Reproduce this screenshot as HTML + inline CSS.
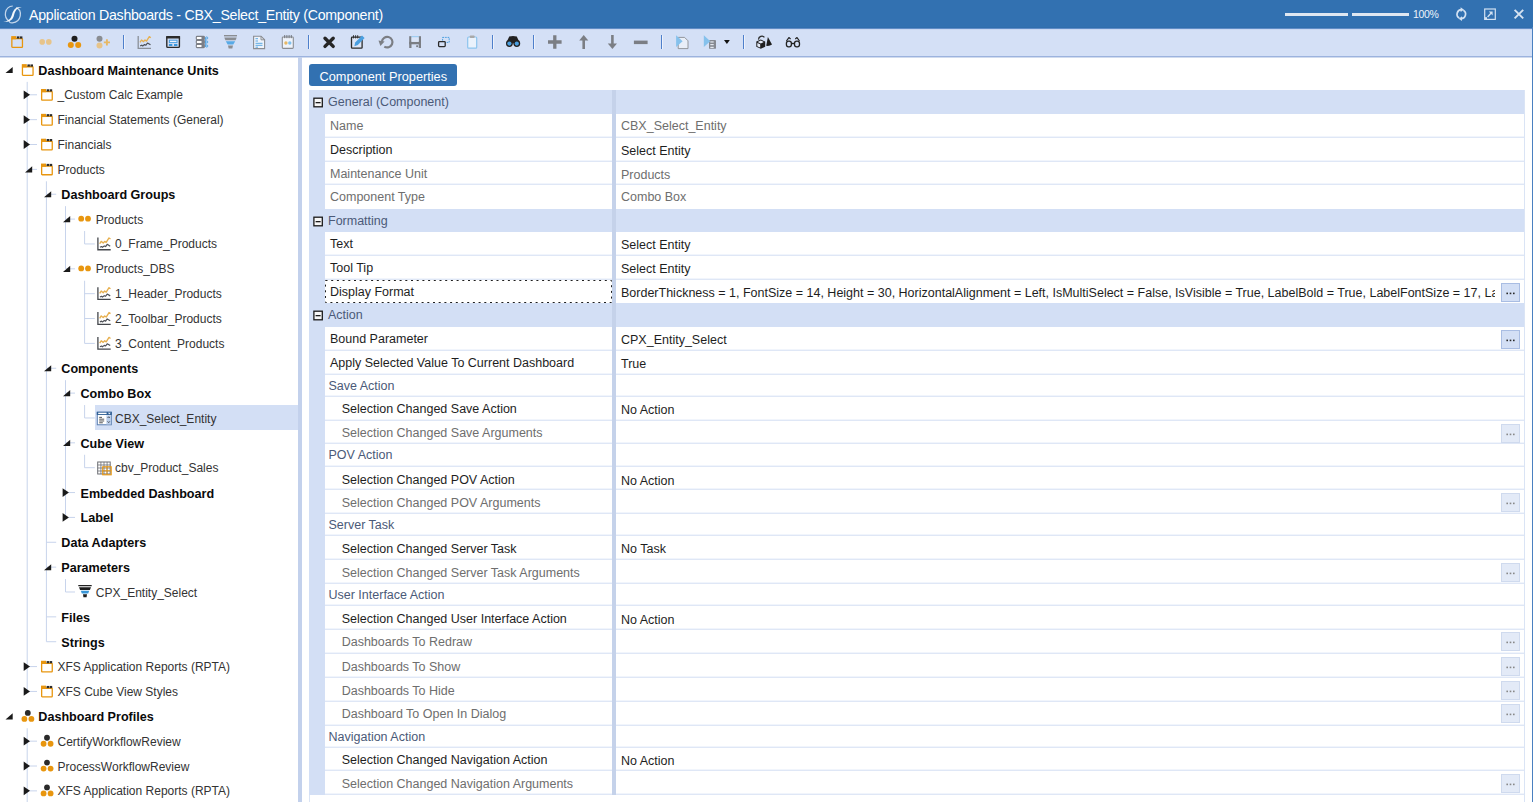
<!DOCTYPE html><html><head><meta charset="utf-8"><style>html,body{margin:0;padding:0;width:1536px;height:802px;overflow:hidden;background:#ffffff;}</style></head><body><div style="position:relative;width:1536px;height:802px;overflow:hidden"><div style="position:absolute;left:0;top:0;width:1533px;height:28px;background:#3271b1"></div>
<div style="position:absolute;left:0;top:27px;width:1533px;height:1px;background:#306ead"></div>
<div style="position:absolute;left:0;top:28px;width:1533px;height:1px;background:#5f8cc6"></div>
<svg style="position:absolute;left:0;top:0" width="28" height="28" viewBox="0 0 28 28">
<g fill="none" stroke="#e8f0fa" stroke-width="1.25" opacity="0.8">
<path d="M12.8 6 C 4.8 6.6, 2.4 17.2, 9.8 21.7"/>
<path d="M16.2 7.7 C 22.6 10.4, 21.8 21.6, 12.4 22.8 C 11.2 22.9, 10.2 22.6, 9.4 22.2"/>
</g>
<path d="M21.8 7 C 16 6.2, 13.4 9.6, 12.1 14.2 C 10.9 18.6, 8.6 21.2, 3.2 21.6 C 9.2 22.7, 12.8 20.2, 14 15.3 C 15.1 10.8, 16.8 7.8, 21.8 7 Z" fill="#ffffff" opacity="0.95"/>
</svg>
<div style="position:absolute;left:29px;top:7.2px;font:14.2px 'Liberation Sans', sans-serif;color:#ffffff;white-space:nowrap;line-height:16px;letter-spacing:-0.28px">Application Dashboards - CBX_Select_Entity (Component)</div>
<div style="position:absolute;left:1285px;top:13px;width:63px;height:3px;background:#dfe7f1"></div>
<div style="position:absolute;left:1352px;top:13px;width:57px;height:3px;background:#dfe7f1"></div>
<div style="position:absolute;left:1413px;top:8px;font:10.5px 'Liberation Sans', sans-serif;color:#eef3fa;white-space:nowrap;line-height:12px;letter-spacing:-0.3px">100%</div>
<svg style="position:absolute;left:1440px;top:0" width="96" height="28" viewBox="1440 0 96 28">
<g fill="none" stroke="#d2e1f2" stroke-width="1.7">
<path d="M1461.6 9.7 A4.5 4.5 0 0 0 1459.3 18.1"/><path d="M1461 18.7 A4.5 4.5 0 0 0 1463.3 10.3"/>
</g>
<path d="M1460.6 7.3 L1464 9.7 L1460.6 12.1 Z" fill="#d2e1f2"/>
<path d="M1462 16.3 L1458.6 18.7 L1462 21.1 Z" fill="#d2e1f2"/>
<rect x="1484.7" y="9" width="10.6" height="10.4" fill="none" stroke="#d2e1f2" stroke-width="1.2"/>
<rect x="1484.6" y="17.2" width="2.4" height="2.3" fill="#d2e1f2"/>
<path d="M1487.6 17 L1491.4 12.8" fill="none" stroke="#d2e1f2" stroke-width="1.3"/>
<path d="M1488.8 11.6 L1492.6 11.6 L1492.6 15.4 Z" fill="#d2e1f2"/>
<path d="M1514.6 9.8 L1523.2 18.4 M1523.2 9.8 L1514.6 18.4" stroke="#d6e3f1" stroke-width="1.9"/>
</svg>
<div style="position:absolute;left:0;top:29px;width:1532px;height:27px;background:#d4e0f6"></div>
<div style="position:absolute;left:0;top:29px;width:1532px;height:1px;background:#c9d7f1"></div>
<div style="position:absolute;left:0;top:56px;width:1532px;height:1px;background:#9cb3de"></div>
<div style="position:absolute;left:0;top:57px;width:1532px;height:1px;background:#d0dbee"></div>
<svg style="position:absolute;left:0;top:0" width="820" height="57" viewBox="0 0 820 57"><g transform="translate(11.2 36.1)"><rect x="0.65" y="2.6" width="10.6" height="8.6" rx="0.6" fill="none" stroke="#e8960f" stroke-width="1.3"/><rect x="0" y="0" width="5" height="3.2" fill="#e8960f"/><rect x="5.6" y="0.3" width="2.5" height="2.2" fill="#2b2b2b"/><rect x="8.6" y="0.3" width="2.6" height="2.2" fill="#2b2b2b"/></g><circle cx="42.2" cy="41.9" r="2.8" fill="#e7c48a"/><circle cx="48.8" cy="41.9" r="2.8" fill="#e7c48a"/><circle cx="74.5" cy="38.7" r="3" fill="#1f1f1f"/><circle cx="70.8" cy="44.9" r="3" fill="#e8960f"/><circle cx="78.2" cy="44.9" r="3" fill="#e8960f"/><circle cx="99.5" cy="38.7" r="3" fill="#8a8d92"/><circle cx="99.5" cy="45.6" r="3" fill="#e7c48a"/><path d="M103.8 42.4 H110 M106.9 39.3 V45.5" stroke="#e7b865" stroke-width="1.9"/><rect x="123" y="35" width="1" height="14" fill="#4d7fcb"/><rect x="124" y="35.5" width="1" height="13.5" fill="#edf2fb"/><rect x="308" y="35" width="1" height="14" fill="#4d7fcb"/><rect x="309" y="35.5" width="1" height="13.5" fill="#edf2fb"/><rect x="492" y="35" width="1" height="14" fill="#4d7fcb"/><rect x="493" y="35.5" width="1" height="13.5" fill="#edf2fb"/><rect x="533" y="35" width="1" height="14" fill="#4d7fcb"/><rect x="534" y="35.5" width="1" height="13.5" fill="#edf2fb"/><rect x="661" y="35" width="1" height="14" fill="#4d7fcb"/><rect x="662" y="35.5" width="1" height="13.5" fill="#edf2fb"/><rect x="743" y="35" width="1" height="14" fill="#4d7fcb"/><rect x="744" y="35.5" width="1" height="13.5" fill="#edf2fb"/><g transform="translate(137.5 35.8)"><path d="M0.7 0.3 V12.6 H13.5" fill="none" stroke="#8a9099" stroke-width="1.3"/><path d="M2.5 6.6 L4 4.2 L6 5.8 L7.5 4.2 L9 5.3 L11.8 0.8 L13.3 1.9" fill="none" stroke="#e7b050" stroke-width="1.35" stroke-linejoin="round"/><path d="M2.7 10.1 L4.3 9.4 L5.2 10.2 L7.1 8.8 L8.4 9.4 L10 7.2 L13 9" fill="none" stroke="#4f5258" stroke-width="1.2" stroke-linejoin="round"/></g><rect x="166.8" y="36.8" width="12.6" height="10.6" rx="1" fill="none" stroke="#2b2b2b" stroke-width="1.4"/><rect x="166.1" y="36.1" width="14" height="2.4" fill="#2b2b2b"/><rect x="169.4" y="40.2" width="7.6" height="2.4" fill="#eef3fb" stroke="#4a9fe0" stroke-width="1"/><rect x="168.9" y="44" width="3.4" height="2" fill="#3d98dc"/><rect x="174" y="44" width="3.4" height="2" fill="#3d98dc"/><rect x="196.3" y="36.4" width="8" height="3.2" rx="0.8" fill="#ffffff" stroke="#7c7f86" stroke-width="1.1"/><rect x="201.5" y="36.4" width="3" height="3.2" fill="#7c7f86"/><circle cx="206.7" cy="38.0" r="1.1" fill="none" stroke="#4a9fe0" stroke-width="0.9"/><rect x="196.3" y="40.4" width="8" height="3.2" rx="0.8" fill="#ffffff" stroke="#7c7f86" stroke-width="1.1"/><rect x="201.5" y="40.4" width="3" height="3.2" fill="#7c7f86"/><circle cx="206.7" cy="42.0" r="1.1" fill="none" stroke="#4a9fe0" stroke-width="0.9"/><rect x="196.3" y="44.4" width="8" height="3.2" rx="0.8" fill="#ffffff" stroke="#7c7f86" stroke-width="1.1"/><rect x="201.5" y="44.4" width="3" height="3.2" fill="#7c7f86"/><circle cx="206.7" cy="46.0" r="1.1" fill="none" stroke="#4a9fe0" stroke-width="0.9"/><path d="M205.5 37.5 V47" stroke="#4a9fe0" stroke-width="0.8"/><rect x="224" y="35" width="13" height="1.4" fill="#8a8d92"/><path d="M224.3 37.6 H236.7 L235.6 40.2 H225.4 Z" fill="#8a8d92"/><path d="M225.8 41.2 H235.2 L233.3 44.6 H227.7 Z" fill="#58aae6"/><path d="M228 45.4 H233 L232.3 48.6 H228.7 Z" fill="#8a8d92"/><path d="M253.6 36.2 H261 L264.6 39.8 V48.6 H253.6 Z" fill="#eef3fb" stroke="#8a8d92" stroke-width="1.1"/><path d="M261 36.2 V39.8 H264.6" fill="none" stroke="#8a8d92" stroke-width="1"/><path d="M255.5 38.7 H258 M255.5 41 H258 M255.5 43.3 H262.5 M255.5 45.3 H262.5 M255.5 47.2 H258" stroke="#4a9fe0" stroke-width="0.9"/><rect x="282.3" y="37" width="11" height="11.4" rx="0.8" fill="#eef3fb" stroke="#8a8d92" stroke-width="1.1"/><path d="M284.7 35 V38.2 M286.9 35 V38.2 M289.1 35 V38.2 M291.3 35 V38.2" stroke="#6b6e74" stroke-width="0.9"/><circle cx="285.9" cy="43" r="1.7" fill="#e7b865"/><circle cx="289.8" cy="43" r="1.7" fill="#7fc0ee"/><path d="M325 38.2 L333.2 46.4 M333.2 38.2 L325 46.4" stroke="#262626" stroke-width="3.4" stroke-linecap="round"/><rect x="351.5" y="37.2" width="10.6" height="11" rx="0.8" fill="#dde6f7" stroke="#2b2b2b" stroke-width="1.3"/><path d="M353.5 35.2 V38.4 M355.6 35.2 V38.4 M357.7 35.2 V38.4" stroke="#2b2b2b" stroke-width="0.9"/><path d="M354.3 46.2 L355.2 42.4 L362 35.4 L364.6 38 L357.8 45 Z" fill="#4a9fe0"/><path d="M381.9 41.6 A5.3 5.3 0 1 1 384.3 46.6" fill="none" stroke="#7b7e84" stroke-width="2.2"/><path d="M378.5 40.4 L384.6 41.4 L380.4 46 Z" fill="#7b7e84"/><rect x="409.2" y="36.2" width="2.3" height="11.8" fill="#7b7e84"/><rect x="418.7" y="36.2" width="2.3" height="11.8" fill="#7b7e84"/><rect x="409.2" y="41.8" width="11.8" height="2.5" fill="#7b7e84"/><rect x="411.5" y="36.2" width="7.2" height="1.2" fill="#92c9ef"/><rect x="411.5" y="37.4" width="7.2" height="4.4" fill="#dbe5f7"/><rect x="416.2" y="45.3" width="1.8" height="1.8" fill="#7b7e84"/><rect x="442.6" y="37.4" width="6.6" height="5" fill="none" stroke="#4a9fe0" stroke-width="1" stroke-dasharray="1.6 0.9"/><rect x="438.6" y="41.6" width="6.6" height="5" rx="0.8" fill="#d4e0f6" stroke="#2b2b2b" stroke-width="1.3"/><rect x="467.7" y="37" width="9" height="11.2" rx="0.9" fill="#eaf2fc" stroke="#8cc4ee" stroke-width="1.2"/><rect x="469.8" y="35.4" width="4.8" height="2.6" rx="0.8" fill="#a9a9a9"/><path d="M506.2 43.2 L509.2 36.6 Q513 35.6 516.8 36.6 L519.8 43.2 Z" fill="#222"/><circle cx="509.4" cy="43.5" r="3.4" fill="#222"/><circle cx="516.8" cy="43.5" r="3.4" fill="#222"/><circle cx="509.4" cy="43.6" r="2.1" fill="#4a9fe0"/><circle cx="516.8" cy="43.6" r="2.1" fill="#4a9fe0"/><path d="M548 42 H561.6 M554.8 35.2 V48.8" stroke="#7b7e84" stroke-width="3.3"/><path d="M583.7 38 V49" stroke="#7b7e84" stroke-width="2.6"/><path d="M579.2 40.6 L583.7 35 L588.3 40.6 Z" fill="#7b7e84"/><path d="M612.4 35 V46" stroke="#7b7e84" stroke-width="2.6"/><path d="M607.8 43.4 L612.4 49 L617 43.4 Z" fill="#7b7e84"/><rect x="633.9" y="40.6" width="13.7" height="3.5" fill="#7b7e84"/><path d="M678.2 37.4 H684.6 L688 40.8 V48.6 H678.2 Z" fill="#e8eef8" stroke="#8a8d92" stroke-width="0.9"/><path d="M676.1 35.2 L682.6 41.2 L676.1 47 Z" fill="#85c1ec"/><rect x="709" y="40" width="7" height="8.8" rx="0.9" fill="#858991"/><rect x="710.3" y="41.4" width="3.4" height="1.1" fill="#eef3fb"/><rect x="710.3" y="44.1" width="3.4" height="1.1" fill="#eef3fb"/><rect x="710.3" y="46.8" width="3.4" height="1.1" fill="#eef3fb"/><path d="M703.8 35.2 L710.3 41.2 L703.8 47 Z" fill="#85c1ec"/><path d="M724 40 H729.8 L726.9 44.1 Z" fill="#111"/><path d="M756.3 41.6 L760.8 39.6 L765.2 41.6 V46.8 L760.8 48.8 L756.3 46.8 Z" fill="#1f1f1f"/><path d="M757.6 42 L760.8 40.6 L763.9 42 L760.8 43.4 Z" fill="#e4ebf8"/><path d="M757.3 43 L760.2 44.2 V47.4 L757.3 46.2 Z" fill="#e4ebf8"/><path d="M758.6 39.6 C758.4 36.4 762.6 35 764.4 37.4" fill="none" stroke="#2a2a2a" stroke-width="1.3"/><path d="M766.2 45.8 L767.9 37 L772 44.6 Q769.5 46.4 766.2 45.8 Z" fill="#1f1f1f"/><rect x="786.4" y="41.2" width="5" height="5.6" rx="2.2" fill="none" stroke="#222" stroke-width="1.3"/><rect x="794.5" y="41.2" width="5" height="5.6" rx="2.2" fill="none" stroke="#222" stroke-width="1.3"/><path d="M791.4 43.5 H794.5" stroke="#222" stroke-width="1.4"/><path d="M786.4 41 L788.9 37.6 L790.6 38.9 M799.5 41 L797 37.6 L795.3 38.9" fill="none" stroke="#222" stroke-width="1.2" stroke-linejoin="round"/></svg>
<div style="position:absolute;left:298px;top:57px;width:4px;height:745px;background:#c3d1ec"></div>
<div style="position:absolute;left:1532px;top:27px;width:1px;height:775px;background:#4a80c0"></div>
<div style="position:absolute;left:95px;top:405.4px;width:203px;height:24.5px;background:#d3dff5"></div>
<div style="position:absolute;left:38.3px;top:63.93px;font:700 12.6px/14.48px 'Liberation Sans', sans-serif;color:#0a0a0a;white-space:nowrap;">Dashboard Maintenance Units</div>
<div style="position:absolute;left:57.5px;top:89.33px;font:400 12px/13.79px 'Liberation Sans', sans-serif;color:#333333;white-space:nowrap;">_Custom Calc Example</div>
<div style="position:absolute;left:57.5px;top:114.19px;font:400 12px/13.79px 'Liberation Sans', sans-serif;color:#333333;white-space:nowrap;">Financial Statements (General)</div>
<div style="position:absolute;left:57.5px;top:139.05px;font:400 12px/13.79px 'Liberation Sans', sans-serif;color:#333333;white-space:nowrap;">Financials</div>
<div style="position:absolute;left:57.5px;top:163.91px;font:400 12px/13.79px 'Liberation Sans', sans-serif;color:#333333;white-space:nowrap;">Products</div>
<div style="position:absolute;left:61.3px;top:188.23px;font:700 12.6px/14.48px 'Liberation Sans', sans-serif;color:#0a0a0a;white-space:nowrap;">Dashboard Groups</div>
<div style="position:absolute;left:95.8px;top:213.63px;font:400 12px/13.79px 'Liberation Sans', sans-serif;color:#333333;white-space:nowrap;">Products</div>
<div style="position:absolute;left:115.0px;top:238.49px;font:400 12px/13.79px 'Liberation Sans', sans-serif;color:#333333;white-space:nowrap;">0_Frame_Products</div>
<div style="position:absolute;left:95.8px;top:263.35px;font:400 12px/13.79px 'Liberation Sans', sans-serif;color:#333333;white-space:nowrap;">Products_DBS</div>
<div style="position:absolute;left:115.0px;top:288.21px;font:400 12px/13.79px 'Liberation Sans', sans-serif;color:#333333;white-space:nowrap;">1_Header_Products</div>
<div style="position:absolute;left:115.0px;top:313.07px;font:400 12px/13.79px 'Liberation Sans', sans-serif;color:#333333;white-space:nowrap;">2_Toolbar_Products</div>
<div style="position:absolute;left:115.0px;top:337.93px;font:400 12px/13.79px 'Liberation Sans', sans-serif;color:#333333;white-space:nowrap;">3_Content_Products</div>
<div style="position:absolute;left:61.3px;top:362.25px;font:700 12.6px/14.48px 'Liberation Sans', sans-serif;color:#0a0a0a;white-space:nowrap;">Components</div>
<div style="position:absolute;left:80.5px;top:387.11px;font:700 12.6px/14.48px 'Liberation Sans', sans-serif;color:#0a0a0a;white-space:nowrap;">Combo Box</div>
<div style="position:absolute;left:115.0px;top:412.51px;font:400 12px/13.79px 'Liberation Sans', sans-serif;color:#333333;white-space:nowrap;">CBX_Select_Entity</div>
<div style="position:absolute;left:80.5px;top:436.83px;font:700 12.6px/14.48px 'Liberation Sans', sans-serif;color:#0a0a0a;white-space:nowrap;">Cube View</div>
<div style="position:absolute;left:115.0px;top:462.23px;font:400 12px/13.79px 'Liberation Sans', sans-serif;color:#333333;white-space:nowrap;">cbv_Product_Sales</div>
<div style="position:absolute;left:80.5px;top:486.55px;font:700 12.6px/14.48px 'Liberation Sans', sans-serif;color:#0a0a0a;white-space:nowrap;">Embedded Dashboard</div>
<div style="position:absolute;left:80.5px;top:511.41px;font:700 12.6px/14.48px 'Liberation Sans', sans-serif;color:#0a0a0a;white-space:nowrap;">Label</div>
<div style="position:absolute;left:61.3px;top:536.27px;font:700 12.6px/14.48px 'Liberation Sans', sans-serif;color:#0a0a0a;white-space:nowrap;">Data Adapters</div>
<div style="position:absolute;left:61.3px;top:561.13px;font:700 12.6px/14.48px 'Liberation Sans', sans-serif;color:#0a0a0a;white-space:nowrap;">Parameters</div>
<div style="position:absolute;left:95.8px;top:586.53px;font:400 12px/13.79px 'Liberation Sans', sans-serif;color:#333333;white-space:nowrap;">CPX_Entity_Select</div>
<div style="position:absolute;left:61.3px;top:610.85px;font:700 12.6px/14.48px 'Liberation Sans', sans-serif;color:#0a0a0a;white-space:nowrap;">Files</div>
<div style="position:absolute;left:61.3px;top:635.71px;font:700 12.6px/14.48px 'Liberation Sans', sans-serif;color:#0a0a0a;white-space:nowrap;">Strings</div>
<div style="position:absolute;left:57.5px;top:661.11px;font:400 12px/13.79px 'Liberation Sans', sans-serif;color:#333333;white-space:nowrap;">XFS Application Reports (RPTA)</div>
<div style="position:absolute;left:57.5px;top:685.97px;font:400 12px/13.79px 'Liberation Sans', sans-serif;color:#333333;white-space:nowrap;">XFS Cube View Styles</div>
<div style="position:absolute;left:38.3px;top:710.29px;font:700 12.6px/14.48px 'Liberation Sans', sans-serif;color:#0a0a0a;white-space:nowrap;">Dashboard Profiles</div>
<div style="position:absolute;left:57.5px;top:735.69px;font:400 12px/13.79px 'Liberation Sans', sans-serif;color:#333333;white-space:nowrap;">CertifyWorkflowReview</div>
<div style="position:absolute;left:57.5px;top:760.55px;font:400 12px/13.79px 'Liberation Sans', sans-serif;color:#333333;white-space:nowrap;">ProcessWorkflowReview</div>
<div style="position:absolute;left:57.5px;top:785.41px;font:400 12px/13.79px 'Liberation Sans', sans-serif;color:#333333;white-space:nowrap;">XFS Application Reports (RPTA)</div>
<svg style="position:absolute;left:0;top:0" width="298" height="802" viewBox="0 0 298 802"><rect x="26.7" y="81.86" width="1" height="609.57" fill="#c8d4ec"/><rect x="45.9" y="181.30" width="1" height="460.41" fill="#c8d4ec"/><rect x="65.0" y="206.16" width="1" height="62.65" fill="#c8d4ec"/><rect x="84.1" y="231.02" width="1" height="12.93" fill="#c8d4ec"/><rect x="84.1" y="280.74" width="1" height="62.65" fill="#c8d4ec"/><rect x="65.0" y="380.18" width="1" height="137.23" fill="#c8d4ec"/><rect x="84.1" y="405.04" width="1" height="12.93" fill="#c8d4ec"/><rect x="84.1" y="454.76" width="1" height="12.93" fill="#c8d4ec"/><rect x="65.0" y="579.06" width="1" height="12.93" fill="#c8d4ec"/><rect x="26.7" y="728.22" width="1" height="73.78" fill="#c8d4ec"/><path d="M5.5 73.03 L12.7 73.03 L12.7 66.93 Z" fill="#1a1a1a"/><g transform="translate(21.8 64.13000000000001)"><rect x="0.65" y="2.6" width="10.6" height="8.6" rx="0.6" fill="#ffffff" stroke="#e8960f" stroke-width="1.3"/><rect x="0" y="0" width="5" height="3.2" fill="#e8960f"/><rect x="5.6" y="0.3" width="2.5" height="2.2" fill="#2b2b2b"/><rect x="8.6" y="0.3" width="2.6" height="2.2" fill="#2b2b2b"/></g><rect x="27.2" y="94.29" width="9.80" height="1" fill="#c8d4ec"/><path d="M23.7 90.39 L30.0 94.79 L23.7 99.19 Z" fill="#1a1a1a"/><g transform="translate(41.0 88.99)"><rect x="0.65" y="2.6" width="10.6" height="8.6" rx="0.6" fill="#ffffff" stroke="#e8960f" stroke-width="1.3"/><rect x="0" y="0" width="5" height="3.2" fill="#e8960f"/><rect x="5.6" y="0.3" width="2.5" height="2.2" fill="#2b2b2b"/><rect x="8.6" y="0.3" width="2.6" height="2.2" fill="#2b2b2b"/></g><rect x="27.2" y="119.15" width="9.80" height="1" fill="#c8d4ec"/><path d="M23.7 115.25 L30.0 119.65 L23.7 124.05 Z" fill="#1a1a1a"/><g transform="translate(41.0 113.85000000000001)"><rect x="0.65" y="2.6" width="10.6" height="8.6" rx="0.6" fill="#ffffff" stroke="#e8960f" stroke-width="1.3"/><rect x="0" y="0" width="5" height="3.2" fill="#e8960f"/><rect x="5.6" y="0.3" width="2.5" height="2.2" fill="#2b2b2b"/><rect x="8.6" y="0.3" width="2.6" height="2.2" fill="#2b2b2b"/></g><rect x="27.2" y="144.01" width="9.80" height="1" fill="#c8d4ec"/><path d="M23.7 140.11 L30.0 144.51 L23.7 148.91 Z" fill="#1a1a1a"/><g transform="translate(41.0 138.70999999999998)"><rect x="0.65" y="2.6" width="10.6" height="8.6" rx="0.6" fill="#ffffff" stroke="#e8960f" stroke-width="1.3"/><rect x="0" y="0" width="5" height="3.2" fill="#e8960f"/><rect x="5.6" y="0.3" width="2.5" height="2.2" fill="#2b2b2b"/><rect x="8.6" y="0.3" width="2.6" height="2.2" fill="#2b2b2b"/></g><rect x="27.2" y="168.87" width="9.80" height="1" fill="#c8d4ec"/><path d="M25.0 172.47 L32.2 172.47 L32.2 166.37 Z" fill="#1a1a1a"/><g transform="translate(41.0 163.57)"><rect x="0.65" y="2.6" width="10.6" height="8.6" rx="0.6" fill="#ffffff" stroke="#e8960f" stroke-width="1.3"/><rect x="0" y="0" width="5" height="3.2" fill="#e8960f"/><rect x="5.6" y="0.3" width="2.5" height="2.2" fill="#2b2b2b"/><rect x="8.6" y="0.3" width="2.6" height="2.2" fill="#2b2b2b"/></g><rect x="46.4" y="193.73" width="9.80" height="1" fill="#c8d4ec"/><path d="M44.0 197.33 L51.2 197.33 L51.2 191.23 Z" fill="#1a1a1a"/><rect x="65.5" y="218.59" width="9.50" height="1" fill="#c8d4ec"/><path d="M63.0 222.19 L70.2 222.19 L70.2 216.09 Z" fill="#1a1a1a"/><circle cx="81.2" cy="218.69" r="2.9" fill="#e8960f"/><circle cx="88.0" cy="218.69" r="2.9" fill="#e8960f"/><rect x="84.6" y="243.45" width="10.20" height="1" fill="#c8d4ec"/><g transform="translate(97.2 237.14999999999998)"><path d="M0.7 0.3 V12.6 H13.5" fill="none" stroke="#44474c" stroke-width="1.3"/><path d="M2.5 6.6 L4 4.2 L6 5.8 L7.5 4.2 L9 5.3 L11.8 0.8 L13.3 1.9" fill="none" stroke="#e7b050" stroke-width="1.35" stroke-linejoin="round"/><path d="M2.7 10.1 L4.3 9.4 L5.2 10.2 L7.1 8.8 L8.4 9.4 L10 7.2 L13 9" fill="none" stroke="#4f5258" stroke-width="1.2" stroke-linejoin="round"/></g><rect x="65.5" y="268.31" width="9.50" height="1" fill="#c8d4ec"/><path d="M63.0 271.91 L70.2 271.91 L70.2 265.81 Z" fill="#1a1a1a"/><circle cx="81.2" cy="268.41" r="2.9" fill="#e8960f"/><circle cx="88.0" cy="268.41" r="2.9" fill="#e8960f"/><rect x="84.6" y="293.17" width="10.20" height="1" fill="#c8d4ec"/><g transform="translate(97.2 286.87)"><path d="M0.7 0.3 V12.6 H13.5" fill="none" stroke="#44474c" stroke-width="1.3"/><path d="M2.5 6.6 L4 4.2 L6 5.8 L7.5 4.2 L9 5.3 L11.8 0.8 L13.3 1.9" fill="none" stroke="#e7b050" stroke-width="1.35" stroke-linejoin="round"/><path d="M2.7 10.1 L4.3 9.4 L5.2 10.2 L7.1 8.8 L8.4 9.4 L10 7.2 L13 9" fill="none" stroke="#4f5258" stroke-width="1.2" stroke-linejoin="round"/></g><rect x="84.6" y="318.03" width="10.20" height="1" fill="#c8d4ec"/><g transform="translate(97.2 311.73)"><path d="M0.7 0.3 V12.6 H13.5" fill="none" stroke="#44474c" stroke-width="1.3"/><path d="M2.5 6.6 L4 4.2 L6 5.8 L7.5 4.2 L9 5.3 L11.8 0.8 L13.3 1.9" fill="none" stroke="#e7b050" stroke-width="1.35" stroke-linejoin="round"/><path d="M2.7 10.1 L4.3 9.4 L5.2 10.2 L7.1 8.8 L8.4 9.4 L10 7.2 L13 9" fill="none" stroke="#4f5258" stroke-width="1.2" stroke-linejoin="round"/></g><rect x="84.6" y="342.89" width="10.20" height="1" fill="#c8d4ec"/><g transform="translate(97.2 336.59)"><path d="M0.7 0.3 V12.6 H13.5" fill="none" stroke="#44474c" stroke-width="1.3"/><path d="M2.5 6.6 L4 4.2 L6 5.8 L7.5 4.2 L9 5.3 L11.8 0.8 L13.3 1.9" fill="none" stroke="#e7b050" stroke-width="1.35" stroke-linejoin="round"/><path d="M2.7 10.1 L4.3 9.4 L5.2 10.2 L7.1 8.8 L8.4 9.4 L10 7.2 L13 9" fill="none" stroke="#4f5258" stroke-width="1.2" stroke-linejoin="round"/></g><rect x="46.4" y="367.75" width="9.80" height="1" fill="#c8d4ec"/><path d="M44.0 371.35 L51.2 371.35 L51.2 365.25 Z" fill="#1a1a1a"/><rect x="65.5" y="392.61" width="9.50" height="1" fill="#c8d4ec"/><path d="M63.0 396.21 L70.2 396.21 L70.2 390.11 Z" fill="#1a1a1a"/><rect x="84.6" y="417.47" width="10.20" height="1" fill="#c8d4ec"/><g transform="translate(96.8 411.77)"><rect x="0.5" y="0.5" width="14" height="12.5" fill="#ffffff" stroke="#5a7fb0" stroke-width="1"/><rect x="0" y="0" width="15" height="3.2" fill="#2f5f95"/><rect x="1.4" y="0.9" width="8.4" height="1.4" fill="#ffffff"/><path d="M11 1 H14 L12.5 2.6 Z" fill="#ffffff"/><rect x="9.6" y="3.6" width="4.6" height="9" fill="#b9cdea"/><path d="M10.8 6.2 L11.9 5 L13 6.2 M10.8 9.6 L11.9 10.8 L13 9.6" fill="none" stroke="#333" stroke-width="0.8"/><path d="M2.4 5.6 H5.2 M2.4 7.4 H7.4 M2.4 9.2 H7.4 M2.4 11 H6" stroke="#444" stroke-width="0.9"/></g><rect x="65.5" y="442.33" width="9.50" height="1" fill="#c8d4ec"/><path d="M63.0 445.93 L70.2 445.93 L70.2 439.83 Z" fill="#1a1a1a"/><rect x="84.6" y="467.19" width="10.20" height="1" fill="#c8d4ec"/><g transform="translate(97.2 461.49)"><rect x="0.5" y="0.5" width="12.5" height="12" fill="none" stroke="#6d6f74" stroke-width="1"/><path d="M0.5 3.5 H13 M0.5 6.5 H13 M0.5 9.5 H13 M3.7 0.5 V12.5 M6.8 0.5 V12.5 M9.9 0.5 V12.5" stroke="#6d6f74" stroke-width="0.8"/><rect x="5.5" y="5.3" width="8.5" height="8" fill="none" stroke="#e8960f" stroke-width="1.1"/><path d="M5.5 9.3 H14 M9.75 5.3 V13.3" stroke="#e8960f" stroke-width="0.9"/></g><rect x="65.5" y="492.05" width="9.50" height="1" fill="#c8d4ec"/><path d="M62.6 488.15 L68.9 492.55 L62.6 496.95 Z" fill="#1a1a1a"/><rect x="65.5" y="516.91" width="9.50" height="1" fill="#c8d4ec"/><path d="M62.6 513.01 L68.9 517.41 L62.6 521.81 Z" fill="#1a1a1a"/><rect x="46.4" y="541.77" width="9.80" height="1" fill="#c8d4ec"/><rect x="46.4" y="566.63" width="9.80" height="1" fill="#c8d4ec"/><path d="M44.0 570.23 L51.2 570.23 L51.2 564.13 Z" fill="#1a1a1a"/><rect x="65.5" y="591.49" width="9.50" height="1" fill="#c8d4ec"/><g transform="translate(78.2 584.99)"><rect x="0" y="0" width="13.6" height="1.2" rx="0.5" fill="#222"/><path d="M0.8 2.2 H12.8 L11.7 4.9 H1.9 Z" fill="#1f1f1f"/><path d="M2.6 5.7 H11 L10 8.5 H3.6 Z" fill="#3a97d8"/><path d="M4.8 9.3 H8.8 L8.4 12.3 H5.2 Z" fill="#1f1f1f"/></g><rect x="46.4" y="616.35" width="9.80" height="1" fill="#c8d4ec"/><rect x="46.4" y="641.21" width="9.80" height="1" fill="#c8d4ec"/><rect x="27.2" y="666.07" width="9.80" height="1" fill="#c8d4ec"/><path d="M23.7 662.17 L30.0 666.57 L23.7 670.97 Z" fill="#1a1a1a"/><g transform="translate(41.0 660.77)"><rect x="0.65" y="2.6" width="10.6" height="8.6" rx="0.6" fill="#ffffff" stroke="#e8960f" stroke-width="1.3"/><rect x="0" y="0" width="5" height="3.2" fill="#e8960f"/><rect x="5.6" y="0.3" width="2.5" height="2.2" fill="#2b2b2b"/><rect x="8.6" y="0.3" width="2.6" height="2.2" fill="#2b2b2b"/></g><rect x="27.2" y="690.93" width="9.80" height="1" fill="#c8d4ec"/><path d="M23.7 687.03 L30.0 691.43 L23.7 695.83 Z" fill="#1a1a1a"/><g transform="translate(41.0 685.63)"><rect x="0.65" y="2.6" width="10.6" height="8.6" rx="0.6" fill="#ffffff" stroke="#e8960f" stroke-width="1.3"/><rect x="0" y="0" width="5" height="3.2" fill="#e8960f"/><rect x="5.6" y="0.3" width="2.5" height="2.2" fill="#2b2b2b"/><rect x="8.6" y="0.3" width="2.6" height="2.2" fill="#2b2b2b"/></g><path d="M5.5 719.39 L12.7 719.39 L12.7 713.29 Z" fill="#1a1a1a"/><circle cx="27.8" cy="712.89" r="2.9" fill="#2a2a2a"/><circle cx="24.400000000000002" cy="718.89" r="2.9" fill="#e8960f"/><circle cx="31.4" cy="718.89" r="2.9" fill="#e8960f"/><rect x="27.2" y="740.65" width="9.80" height="1" fill="#c8d4ec"/><path d="M23.7 736.75 L30.0 741.15 L23.7 745.55 Z" fill="#1a1a1a"/><circle cx="47.0" cy="737.75" r="2.9" fill="#2a2a2a"/><circle cx="43.6" cy="743.75" r="2.9" fill="#e8960f"/><circle cx="50.6" cy="743.75" r="2.9" fill="#e8960f"/><rect x="27.2" y="765.51" width="9.80" height="1" fill="#c8d4ec"/><path d="M23.7 761.61 L30.0 766.01 L23.7 770.41 Z" fill="#1a1a1a"/><circle cx="47.0" cy="762.61" r="2.9" fill="#2a2a2a"/><circle cx="43.6" cy="768.61" r="2.9" fill="#e8960f"/><circle cx="50.6" cy="768.61" r="2.9" fill="#e8960f"/><rect x="27.2" y="790.37" width="9.80" height="1" fill="#c8d4ec"/><path d="M23.7 786.47 L30.0 790.87 L23.7 795.27 Z" fill="#1a1a1a"/><circle cx="47.0" cy="787.47" r="2.9" fill="#2a2a2a"/><circle cx="43.6" cy="793.47" r="2.9" fill="#e8960f"/><circle cx="50.6" cy="793.47" r="2.9" fill="#e8960f"/></svg>
<div style="position:absolute;left:309px;top:64.2px;width:148px;height:21.6px;background:#3271b1;border-radius:3px"></div>
<div style="position:absolute;left:319.5px;top:69.66px;font:400 12.75px/14.65px 'Liberation Sans', sans-serif;color:#ffffff;white-space:nowrap;">Component Properties</div>
<div style="position:absolute;left:1524px;top:90px;width:1px;height:712px;background:#dae4f5"></div>
<div style="position:absolute;left:309px;top:795px;width:1px;height:7px;background:#dae4f5"></div>
<div style="position:absolute;left:309px;top:90px;width:16px;height:705px;background:#d3dff5"></div>
<div style="position:absolute;left:309px;top:90px;width:1215px;height:23.70px;background:#d3dff5"></div>
<svg style="position:absolute;left:312px;top:97.00px" width="12" height="12" viewBox="0 0 12 12"><rect x="1.9" y="1.2" width="8.4" height="8.6" fill="#f7f7f7" stroke="#1a1a1a" stroke-width="1.3"/><rect x="3.6" y="5" width="5" height="1.3" fill="#1a1a1a"/></svg>
<div style="position:absolute;left:328px;top:95.49px;font:400 12.5px/14.36px 'Liberation Sans', sans-serif;color:#4b5a78;white-space:nowrap;">General (Component)</div>
<div style="position:absolute;left:325px;top:136px;width:1199px;height:1px;background:#f1f5fc"></div>
<div style="position:absolute;left:325px;top:137px;width:1199px;height:1px;background:#dfe7f6"></div>
<div style="position:absolute;left:330px;top:118.69px;font:400 12.5px/14.36px 'Liberation Sans', sans-serif;color:#6e6e6e;white-space:nowrap;">Name</div>
<div style="position:absolute;left:621px;top:119.29px;font:400 12.5px/14.36px 'Liberation Sans', sans-serif;color:#6e6e6e;white-space:nowrap;">CBX_Select_Entity</div>
<div style="position:absolute;left:325px;top:160px;width:1199px;height:1px;background:#f1f5fc"></div>
<div style="position:absolute;left:325px;top:161px;width:1199px;height:1px;background:#dfe7f6"></div>
<div style="position:absolute;left:330px;top:142.99px;font:400 12.5px/14.36px 'Liberation Sans', sans-serif;color:#1e1e1e;white-space:nowrap;">Description</div>
<div style="position:absolute;left:621px;top:143.59px;font:400 12.5px/14.36px 'Liberation Sans', sans-serif;color:#1e1e1e;white-space:nowrap;">Select Entity</div>
<div style="position:absolute;left:325px;top:183px;width:1199px;height:1px;background:#f1f5fc"></div>
<div style="position:absolute;left:325px;top:184px;width:1199px;height:1px;background:#dfe7f6"></div>
<div style="position:absolute;left:330px;top:167.09px;font:400 12.5px/14.36px 'Liberation Sans', sans-serif;color:#6e6e6e;white-space:nowrap;">Maintenance Unit</div>
<div style="position:absolute;left:621px;top:167.69px;font:400 12.5px/14.36px 'Liberation Sans', sans-serif;color:#6e6e6e;white-space:nowrap;">Products</div>
<div style="position:absolute;left:325px;top:-11px;width:1199px;height:1px;background:#f1f5fc"></div>
<div style="position:absolute;left:325px;top:-10px;width:1199px;height:1px;background:#dfe7f6"></div>
<div style="position:absolute;left:330px;top:189.89px;font:400 12.5px/14.36px 'Liberation Sans', sans-serif;color:#6e6e6e;white-space:nowrap;">Component Type</div>
<div style="position:absolute;left:621px;top:190.49px;font:400 12.5px/14.36px 'Liberation Sans', sans-serif;color:#6e6e6e;white-space:nowrap;">Combo Box</div>
<div style="position:absolute;left:309px;top:208.5px;width:1215px;height:23.80px;background:#d3dff5"></div>
<svg style="position:absolute;left:312px;top:215.50px" width="12" height="12" viewBox="0 0 12 12"><rect x="1.9" y="1.2" width="8.4" height="8.6" fill="#f7f7f7" stroke="#1a1a1a" stroke-width="1.3"/><rect x="3.6" y="5" width="5" height="1.3" fill="#1a1a1a"/></svg>
<div style="position:absolute;left:328px;top:213.99px;font:400 12.5px/14.36px 'Liberation Sans', sans-serif;color:#4b5a78;white-space:nowrap;">Formatting</div>
<div style="position:absolute;left:325px;top:254px;width:1199px;height:1px;background:#f1f5fc"></div>
<div style="position:absolute;left:325px;top:255px;width:1199px;height:1px;background:#dfe7f6"></div>
<div style="position:absolute;left:330px;top:237.29px;font:400 12.5px/14.36px 'Liberation Sans', sans-serif;color:#1e1e1e;white-space:nowrap;">Text</div>
<div style="position:absolute;left:621px;top:237.89px;font:400 12.5px/14.36px 'Liberation Sans', sans-serif;color:#1e1e1e;white-space:nowrap;">Select Entity</div>
<div style="position:absolute;left:325px;top:278px;width:1199px;height:1px;background:#f1f5fc"></div>
<div style="position:absolute;left:325px;top:279px;width:1199px;height:1px;background:#dfe7f6"></div>
<div style="position:absolute;left:330px;top:261.09px;font:400 12.5px/14.36px 'Liberation Sans', sans-serif;color:#1e1e1e;white-space:nowrap;">Tool Tip</div>
<div style="position:absolute;left:621px;top:261.69px;font:400 12.5px/14.36px 'Liberation Sans', sans-serif;color:#1e1e1e;white-space:nowrap;">Select Entity</div>
<div style="position:absolute;left:325px;top:-11px;width:1199px;height:1px;background:#f1f5fc"></div>
<div style="position:absolute;left:325px;top:-10px;width:1199px;height:1px;background:#dfe7f6"></div>
<div style="position:absolute;left:330px;top:284.99px;font:400 12.5px/14.36px 'Liberation Sans', sans-serif;color:#1e1e1e;white-space:nowrap;">Display Format</div>
<div style="position:absolute;left:621px;top:285.59px;font:400 12.5px/14.36px 'Liberation Sans', sans-serif;color:#1e1e1e;white-space:nowrap;width:874px;overflow:hidden;">BorderThickness = 1, FontSize = 14, Height = 30, HorizontalAlignment = Left, IsMultiSelect = False, IsVisible = True, LabelBold = True, LabelFontSize = 17, LabelWidth = 120</div>
<div style="position:absolute;left:1501px;top:282.50px;width:17px;height:17px;background:#d3dff5;border:1px solid #a9bde3"></div>
<svg style="position:absolute;left:1501px;top:282.50px" width="19" height="19" viewBox="0 0 19 19"><rect x="5.4" y="9.6" width="1.6" height="1.6" fill="#2a2a2a"/><rect x="8.7" y="9.6" width="1.6" height="1.6" fill="#2a2a2a"/><rect x="12" y="9.6" width="1.6" height="1.6" fill="#2a2a2a"/></svg>
<div style="position:absolute;left:309px;top:302.75px;width:1215px;height:24.35px;background:#d3dff5"></div>
<svg style="position:absolute;left:312px;top:309.75px" width="12" height="12" viewBox="0 0 12 12"><rect x="1.9" y="1.2" width="8.4" height="8.6" fill="#f7f7f7" stroke="#1a1a1a" stroke-width="1.3"/><rect x="3.6" y="5" width="5" height="1.3" fill="#1a1a1a"/></svg>
<div style="position:absolute;left:328px;top:308.24px;font:400 12.5px/14.36px 'Liberation Sans', sans-serif;color:#4b5a78;white-space:nowrap;">Action</div>
<div style="position:absolute;left:325px;top:349px;width:1199px;height:1px;background:#f1f5fc"></div>
<div style="position:absolute;left:325px;top:350px;width:1199px;height:1px;background:#dfe7f6"></div>
<div style="position:absolute;left:330px;top:332.09px;font:400 12.5px/14.36px 'Liberation Sans', sans-serif;color:#1e1e1e;white-space:nowrap;">Bound Parameter</div>
<div style="position:absolute;left:621px;top:332.69px;font:400 12.5px/14.36px 'Liberation Sans', sans-serif;color:#1e1e1e;white-space:nowrap;">CPX_Entity_Select</div>
<div style="position:absolute;left:1501px;top:329.60px;width:17px;height:17px;background:#d3dff5;border:1px solid #a9bde3"></div>
<svg style="position:absolute;left:1501px;top:329.60px" width="19" height="19" viewBox="0 0 19 19"><rect x="5.4" y="9.6" width="1.6" height="1.6" fill="#2a2a2a"/><rect x="8.7" y="9.6" width="1.6" height="1.6" fill="#2a2a2a"/><rect x="12" y="9.6" width="1.6" height="1.6" fill="#2a2a2a"/></svg>
<div style="position:absolute;left:325px;top:373px;width:1199px;height:1px;background:#f1f5fc"></div>
<div style="position:absolute;left:325px;top:374px;width:1199px;height:1px;background:#dfe7f6"></div>
<div style="position:absolute;left:330px;top:355.99px;font:400 12.5px/14.36px 'Liberation Sans', sans-serif;color:#1e1e1e;white-space:nowrap;">Apply Selected Value To Current Dashboard</div>
<div style="position:absolute;left:621px;top:356.59px;font:400 12.5px/14.36px 'Liberation Sans', sans-serif;color:#1e1e1e;white-space:nowrap;">True</div>
<div style="position:absolute;left:325px;top:395px;width:1199px;height:1px;background:#f1f5fc"></div>
<div style="position:absolute;left:325px;top:396px;width:1199px;height:1px;background:#dfe7f6"></div>
<div style="position:absolute;left:328.5px;top:379.19px;font:400 12.5px/14.36px 'Liberation Sans', sans-serif;color:#4b5a78;white-space:nowrap;">Save Action</div>
<div style="position:absolute;left:325px;top:419px;width:1199px;height:1px;background:#f1f5fc"></div>
<div style="position:absolute;left:325px;top:420px;width:1199px;height:1px;background:#dfe7f6"></div>
<div style="position:absolute;left:341.7px;top:402.09px;font:400 12.5px/14.36px 'Liberation Sans', sans-serif;color:#1e1e1e;white-space:nowrap;">Selection Changed Save Action</div>
<div style="position:absolute;left:621px;top:402.69px;font:400 12.5px/14.36px 'Liberation Sans', sans-serif;color:#1e1e1e;white-space:nowrap;">No Action</div>
<div style="position:absolute;left:325px;top:442px;width:1199px;height:1px;background:#f1f5fc"></div>
<div style="position:absolute;left:325px;top:443px;width:1199px;height:1px;background:#dfe7f6"></div>
<div style="position:absolute;left:341.7px;top:426.09px;font:400 12.5px/14.36px 'Liberation Sans', sans-serif;color:#6e6e6e;white-space:nowrap;">Selection Changed Save Arguments</div>
<div style="position:absolute;left:1501px;top:423.60px;width:17px;height:17px;background:#e3eaf7;border:1px solid #cfdaee"></div>
<svg style="position:absolute;left:1501px;top:423.60px" width="19" height="19" viewBox="0 0 19 19"><rect x="5.4" y="9.6" width="1.6" height="1.6" fill="#888888"/><rect x="8.7" y="9.6" width="1.6" height="1.6" fill="#888888"/><rect x="12" y="9.6" width="1.6" height="1.6" fill="#888888"/></svg>
<div style="position:absolute;left:325px;top:465px;width:1199px;height:1px;background:#f1f5fc"></div>
<div style="position:absolute;left:325px;top:466px;width:1199px;height:1px;background:#dfe7f6"></div>
<div style="position:absolute;left:328.5px;top:448.49px;font:400 12.5px/14.36px 'Liberation Sans', sans-serif;color:#4b5a78;white-space:nowrap;">POV Action</div>
<div style="position:absolute;left:325px;top:488px;width:1199px;height:1px;background:#f1f5fc"></div>
<div style="position:absolute;left:325px;top:489px;width:1199px;height:1px;background:#dfe7f6"></div>
<div style="position:absolute;left:341.7px;top:472.99px;font:400 12.5px/14.36px 'Liberation Sans', sans-serif;color:#1e1e1e;white-space:nowrap;">Selection Changed POV Action</div>
<div style="position:absolute;left:621px;top:473.59px;font:400 12.5px/14.36px 'Liberation Sans', sans-serif;color:#1e1e1e;white-space:nowrap;">No Action</div>
<div style="position:absolute;left:325px;top:512px;width:1199px;height:1px;background:#f1f5fc"></div>
<div style="position:absolute;left:325px;top:513px;width:1199px;height:1px;background:#dfe7f6"></div>
<div style="position:absolute;left:341.7px;top:495.89px;font:400 12.5px/14.36px 'Liberation Sans', sans-serif;color:#6e6e6e;white-space:nowrap;">Selection Changed POV Arguments</div>
<div style="position:absolute;left:1501px;top:492.80px;width:17px;height:17px;background:#e3eaf7;border:1px solid #cfdaee"></div>
<svg style="position:absolute;left:1501px;top:492.80px" width="19" height="19" viewBox="0 0 19 19"><rect x="5.4" y="9.6" width="1.6" height="1.6" fill="#888888"/><rect x="8.7" y="9.6" width="1.6" height="1.6" fill="#888888"/><rect x="12" y="9.6" width="1.6" height="1.6" fill="#888888"/></svg>
<div style="position:absolute;left:325px;top:534px;width:1199px;height:1px;background:#f1f5fc"></div>
<div style="position:absolute;left:325px;top:535px;width:1199px;height:1px;background:#dfe7f6"></div>
<div style="position:absolute;left:328.5px;top:517.99px;font:400 12.5px/14.36px 'Liberation Sans', sans-serif;color:#4b5a78;white-space:nowrap;">Server Task</div>
<div style="position:absolute;left:325px;top:558px;width:1199px;height:1px;background:#f1f5fc"></div>
<div style="position:absolute;left:325px;top:559px;width:1199px;height:1px;background:#dfe7f6"></div>
<div style="position:absolute;left:341.7px;top:541.79px;font:400 12.5px/14.36px 'Liberation Sans', sans-serif;color:#1e1e1e;white-space:nowrap;">Selection Changed Server Task</div>
<div style="position:absolute;left:621px;top:542.39px;font:400 12.5px/14.36px 'Liberation Sans', sans-serif;color:#1e1e1e;white-space:nowrap;">No Task</div>
<div style="position:absolute;left:325px;top:582px;width:1199px;height:1px;background:#f1f5fc"></div>
<div style="position:absolute;left:325px;top:583px;width:1199px;height:1px;background:#dfe7f6"></div>
<div style="position:absolute;left:341.7px;top:565.69px;font:400 12.5px/14.36px 'Liberation Sans', sans-serif;color:#6e6e6e;white-space:nowrap;">Selection Changed Server Task Arguments</div>
<div style="position:absolute;left:1501px;top:562.60px;width:17px;height:17px;background:#e3eaf7;border:1px solid #cfdaee"></div>
<svg style="position:absolute;left:1501px;top:562.60px" width="19" height="19" viewBox="0 0 19 19"><rect x="5.4" y="9.6" width="1.6" height="1.6" fill="#888888"/><rect x="8.7" y="9.6" width="1.6" height="1.6" fill="#888888"/><rect x="12" y="9.6" width="1.6" height="1.6" fill="#888888"/></svg>
<div style="position:absolute;left:325px;top:604px;width:1199px;height:1px;background:#f1f5fc"></div>
<div style="position:absolute;left:325px;top:605px;width:1199px;height:1px;background:#dfe7f6"></div>
<div style="position:absolute;left:328.5px;top:588.09px;font:400 12.5px/14.36px 'Liberation Sans', sans-serif;color:#4b5a78;white-space:nowrap;">User Interface Action</div>
<div style="position:absolute;left:325px;top:628px;width:1199px;height:1px;background:#f1f5fc"></div>
<div style="position:absolute;left:325px;top:629px;width:1199px;height:1px;background:#dfe7f6"></div>
<div style="position:absolute;left:341.7px;top:611.99px;font:400 12.5px/14.36px 'Liberation Sans', sans-serif;color:#1e1e1e;white-space:nowrap;">Selection Changed User Interface Action</div>
<div style="position:absolute;left:621px;top:612.59px;font:400 12.5px/14.36px 'Liberation Sans', sans-serif;color:#1e1e1e;white-space:nowrap;">No Action</div>
<div style="position:absolute;left:325px;top:652px;width:1199px;height:1px;background:#f1f5fc"></div>
<div style="position:absolute;left:325px;top:653px;width:1199px;height:1px;background:#dfe7f6"></div>
<div style="position:absolute;left:341.7px;top:635.49px;font:400 12.5px/14.36px 'Liberation Sans', sans-serif;color:#6e6e6e;white-space:nowrap;">Dashboards To Redraw</div>
<div style="position:absolute;left:1501px;top:632.40px;width:17px;height:17px;background:#e3eaf7;border:1px solid #cfdaee"></div>
<svg style="position:absolute;left:1501px;top:632.40px" width="19" height="19" viewBox="0 0 19 19"><rect x="5.4" y="9.6" width="1.6" height="1.6" fill="#888888"/><rect x="8.7" y="9.6" width="1.6" height="1.6" fill="#888888"/><rect x="12" y="9.6" width="1.6" height="1.6" fill="#888888"/></svg>
<div style="position:absolute;left:325px;top:676px;width:1199px;height:1px;background:#f1f5fc"></div>
<div style="position:absolute;left:325px;top:677px;width:1199px;height:1px;background:#dfe7f6"></div>
<div style="position:absolute;left:341.7px;top:659.89px;font:400 12.5px/14.36px 'Liberation Sans', sans-serif;color:#6e6e6e;white-space:nowrap;">Dashboards To Show</div>
<div style="position:absolute;left:1501px;top:656.80px;width:17px;height:17px;background:#e3eaf7;border:1px solid #cfdaee"></div>
<svg style="position:absolute;left:1501px;top:656.80px" width="19" height="19" viewBox="0 0 19 19"><rect x="5.4" y="9.6" width="1.6" height="1.6" fill="#888888"/><rect x="8.7" y="9.6" width="1.6" height="1.6" fill="#888888"/><rect x="12" y="9.6" width="1.6" height="1.6" fill="#888888"/></svg>
<div style="position:absolute;left:325px;top:700px;width:1199px;height:1px;background:#f1f5fc"></div>
<div style="position:absolute;left:325px;top:701px;width:1199px;height:1px;background:#dfe7f6"></div>
<div style="position:absolute;left:341.7px;top:683.69px;font:400 12.5px/14.36px 'Liberation Sans', sans-serif;color:#6e6e6e;white-space:nowrap;">Dashboards To Hide</div>
<div style="position:absolute;left:1501px;top:680.60px;width:17px;height:17px;background:#e3eaf7;border:1px solid #cfdaee"></div>
<svg style="position:absolute;left:1501px;top:680.60px" width="19" height="19" viewBox="0 0 19 19"><rect x="5.4" y="9.6" width="1.6" height="1.6" fill="#888888"/><rect x="8.7" y="9.6" width="1.6" height="1.6" fill="#888888"/><rect x="12" y="9.6" width="1.6" height="1.6" fill="#888888"/></svg>
<div style="position:absolute;left:325px;top:724px;width:1199px;height:1px;background:#f1f5fc"></div>
<div style="position:absolute;left:325px;top:725px;width:1199px;height:1px;background:#dfe7f6"></div>
<div style="position:absolute;left:341.7px;top:707.49px;font:400 12.5px/14.36px 'Liberation Sans', sans-serif;color:#6e6e6e;white-space:nowrap;">Dashboard To Open In Dialog</div>
<div style="position:absolute;left:1501px;top:704.40px;width:17px;height:17px;background:#e3eaf7;border:1px solid #cfdaee"></div>
<svg style="position:absolute;left:1501px;top:704.40px" width="19" height="19" viewBox="0 0 19 19"><rect x="5.4" y="9.6" width="1.6" height="1.6" fill="#888888"/><rect x="8.7" y="9.6" width="1.6" height="1.6" fill="#888888"/><rect x="12" y="9.6" width="1.6" height="1.6" fill="#888888"/></svg>
<div style="position:absolute;left:325px;top:746px;width:1199px;height:1px;background:#f1f5fc"></div>
<div style="position:absolute;left:325px;top:747px;width:1199px;height:1px;background:#dfe7f6"></div>
<div style="position:absolute;left:328.5px;top:729.79px;font:400 12.5px/14.36px 'Liberation Sans', sans-serif;color:#4b5a78;white-space:nowrap;">Navigation Action</div>
<div style="position:absolute;left:325px;top:769px;width:1199px;height:1px;background:#f1f5fc"></div>
<div style="position:absolute;left:325px;top:770px;width:1199px;height:1px;background:#dfe7f6"></div>
<div style="position:absolute;left:341.7px;top:753.44px;font:400 12.5px/14.36px 'Liberation Sans', sans-serif;color:#1e1e1e;white-space:nowrap;">Selection Changed Navigation Action</div>
<div style="position:absolute;left:621px;top:754.04px;font:400 12.5px/14.36px 'Liberation Sans', sans-serif;color:#1e1e1e;white-space:nowrap;">No Action</div>
<div style="position:absolute;left:325px;top:793px;width:1199px;height:1px;background:#f1f5fc"></div>
<div style="position:absolute;left:325px;top:794px;width:1199px;height:1px;background:#dfe7f6"></div>
<div style="position:absolute;left:341.7px;top:776.74px;font:400 12.5px/14.36px 'Liberation Sans', sans-serif;color:#6e6e6e;white-space:nowrap;">Selection Changed Navigation Arguments</div>
<div style="position:absolute;left:1501px;top:773.65px;width:17px;height:17px;background:#e3eaf7;border:1px solid #cfdaee"></div>
<svg style="position:absolute;left:1501px;top:773.65px" width="19" height="19" viewBox="0 0 19 19"><rect x="5.4" y="9.6" width="1.6" height="1.6" fill="#888888"/><rect x="8.7" y="9.6" width="1.6" height="1.6" fill="#888888"/><rect x="12" y="9.6" width="1.6" height="1.6" fill="#888888"/></svg>
<div style="position:absolute;left:612px;top:90px;width:4px;height:705px;background:#c5d2ea"></div>
<svg style="position:absolute;left:320px;top:275px" width="300" height="35" viewBox="320 275 300 35"><rect x="325.5" y="280.5" width="286" height="22" fill="none" stroke="#1e1e1e" stroke-width="1" stroke-dasharray="2 3.7"/></svg></div></body></html>
